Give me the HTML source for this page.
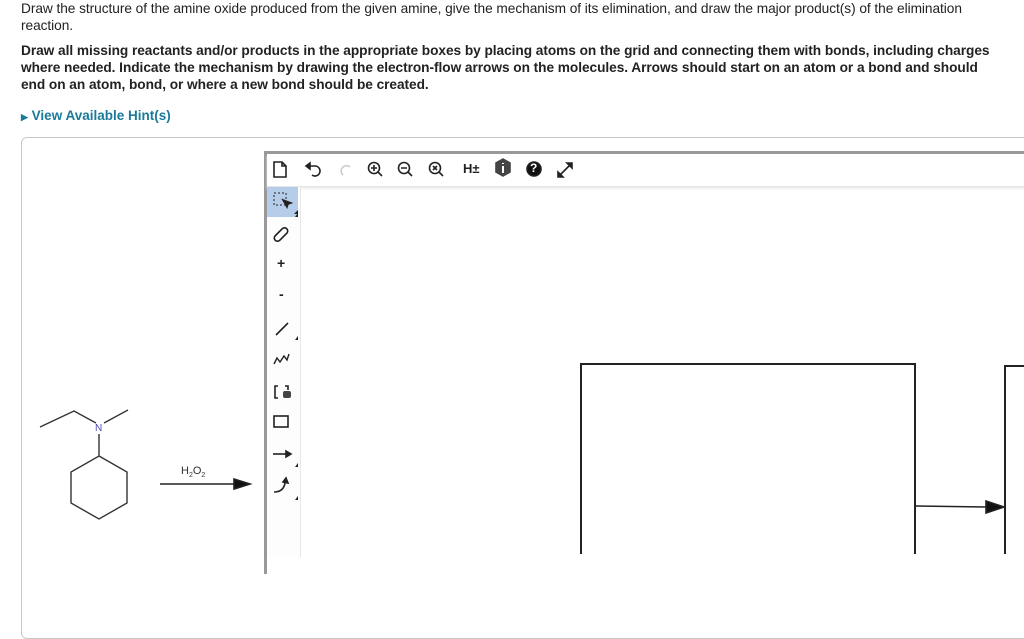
<!DOCTYPE html>
<html><head><meta charset="utf-8"><style>
body{margin:0;width:1024px;height:554px;overflow:hidden;background:#fff;font-family:"Liberation Sans",Arial,sans-serif;color:#222;position:relative}
.t{position:absolute;left:21px;font-size:13.7px;line-height:16.8px}
.b{font-weight:bold}
.hint{position:absolute;left:21px;top:108px;font-size:13.5px;font-weight:bold;color:#1a7a9a}
.outer{position:absolute;left:21px;top:137px;width:1100px;height:500px;border:1px solid #c8c8c8;border-radius:6px}
.frame{position:absolute;left:264px;top:151px;width:800px;height:420px;border-top:3px solid #999;border-left:3px solid #999;background:#fff}
.tb{position:absolute;left:267px;top:154px;width:760px;height:32px;border-bottom:1px solid #e6e6e6;box-shadow:0 2px 2px #eee}
.lb{position:absolute;left:267px;top:187px;width:33px;height:370px;background:#fdfdfd;border-right:1px solid #e8e8e8}
.sel{position:absolute;left:267px;top:187px;width:31px;height:30px;background:#b5cde9}
.ic{position:absolute;font-size:14px;font-weight:bold;color:#222}
</style></head><body>
<div class="t" style="top:1px;width:960px;letter-spacing:-0.05px">Draw the structure of the amine oxide produced from the given amine, give the mechanism of its elimination, and draw the major product(s) of the elimination reaction.</div>
<div class="t b" style="top:43px;width:978px;letter-spacing:-0.05px">Draw all missing reactants and/or products in the appropriate boxes by placing atoms on the grid and connecting them with bonds, including charges where needed. Indicate the mechanism by drawing the electron-flow arrows on the molecules. Arrows should start on an atom or a bond and should end on an atom, bond, or where a new bond should be created.</div>
<div class="hint"><span style="font-size:9px">▶</span> View Available Hint(s)</div>
<div class="outer"></div>
<div class="frame"></div>
<div class="tb"></div>
<div class="lb"></div>
<div class="sel"></div>
<svg width="1024" height="554" style="position:absolute;left:0;top:0" fill="none" stroke="#222" stroke-width="1.6">
<path d="M274 162h8l4 4v11h-12z M282 162v4h4"/>
<path d="M308 166h7a5 5 0 1 1 -3 9" /><path d="M306 166l4-3v6z" fill="#222"/>
<path d="M343 175a5 5 0 1 1 7 -8" stroke="#ccc"/>
<circle cx="374" cy="168" r="5.5"/><path d="M371 168h6M374 165v6M378 172l4 4" />
<circle cx="404" cy="168" r="5.5"/><path d="M401 168h6M408 172l4 4"/>
<circle cx="435" cy="168" r="5.5"/><path d="M433 166l4 4M437 166l-4 4M439 172l4 4"/>
<path d="M496 163l7-4 7 4v9l-7 4-7-4z" fill="#444" stroke="#444"/>
<path d="M503 166v7M503 163v1" stroke="#fff" stroke-width="2"/>
<circle cx="534" cy="169" r="7" fill="#111"/>
<path d="M560 175l10-10" /><path d="M558 177v-5l5 5z M572 163v5l-5-5z" fill="#222"/>
<rect x="274" y="193" width="12" height="12" stroke-dasharray="2 2" stroke-width="1"/>
<path d="M283 200l8 3-3 1-1 3z" fill="#222"/>
<path d="M275 236l7-7a3 3 0 0 1 5 4l-7 7a3 3 0 0 1 -5 -4z"/>
<path d="M276 335l12-12"/>
<path d="M274 364l3-6 3 4 4-6 3 4 2-6" stroke-width="1.4"/>
<path d="M278 386h-3v12h3M285 386h3v4"/>
<rect x="283" y="391" width="8" height="7" rx="2" fill="#444" stroke="none"/>
<rect x="274" y="416" width="14" height="11"/>
<path d="M273 454h14"/><path d="M286 451l5 3-5 3z" fill="#222"/>
<path d="M274 492c6 0 10-3 11-9"/><path d="M283 482l3-4 2 5z" fill="#222"/>
<path d="M295 217h3v-4z M295 340h3v-4z M295 467h3v-4z M295 500h3v-4z M294 214h4v-4z" fill="#222" stroke="none"/>
<path d="M40 427l34-16 22 12 M104 423l24-13 M99 434v22 M99 456l28 16v31l-28 16-28-16v-31z" stroke="#333" stroke-width="1.4"/>
<path d="M160 484h76" stroke-width="1.4"/><path d="M234 479l16 5-16 5z" fill="#111"/>
<rect x="581" y="364" width="334" height="260" stroke-width="2"/>
<path d="M1005 554V366h30" stroke-width="2"/>
<path d="M916 506l70 1" stroke-width="1.6"/><path d="M986 501l18 6-18 6z" fill="#111"/>
</svg>
<div class="ic" style="left:463px;top:161px;font-size:13px">H±</div>
<div style="position:absolute;left:530px;top:161px;color:#fff;font-weight:bold;font-size:12px">?</div>
<div class="ic" style="left:277px;top:255px">+</div>
<div class="ic" style="left:279px;top:286px">-</div>
<div style="position:absolute;left:95px;top:423px;font-size:10px;color:#4a4ab0">N</div>
<div style="position:absolute;left:181px;top:465px;font-size:11px;color:#333">H<sub style="font-size:7px">2</sub>O<sub style="font-size:7px">2</sub></div>
</body></html>
